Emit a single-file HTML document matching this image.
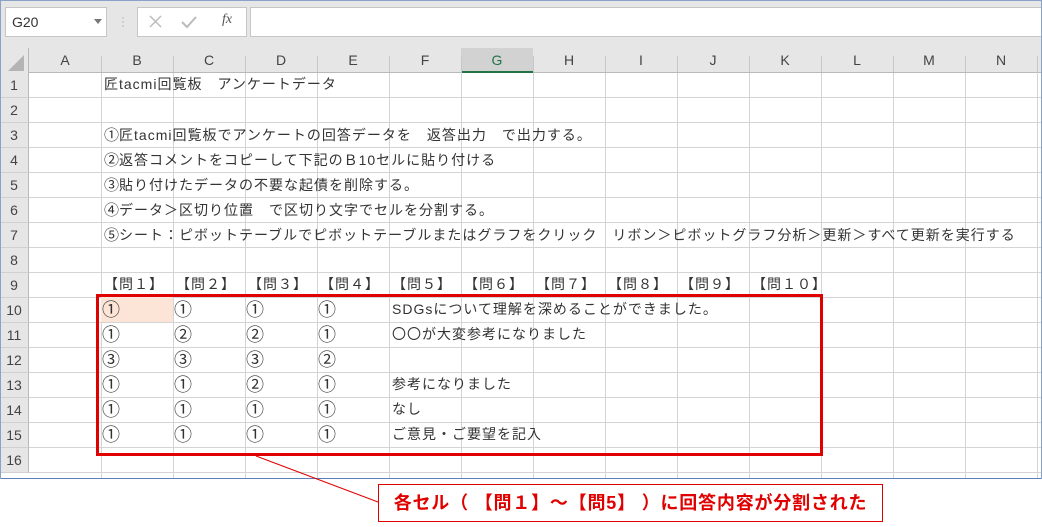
<!DOCTYPE html>
<html><head><meta charset="utf-8"><style>
*{margin:0;padding:0;box-sizing:border-box}
body{width:1042px;height:527px;background:#fff;position:relative;overflow:hidden;font-family:"Liberation Sans","Noto Sans CJK JP",sans-serif;color:#333}
.a{position:absolute}
.top{left:0;top:0;width:1042px;height:48px;background:#e6e6e6;border-top:1px solid #8aa2c8}
.box{background:#fff;border:1px solid #c6c6c6}
.hdr{top:48px;height:25px;background:#e6e6e6;border-bottom:1px solid #b9b9b9;font-size:14px;color:#444;text-align:center;line-height:25px}
.rn{left:0;width:29px;height:25px;background:#e6e6e6;border-right:1px solid #b9b9b9;border-bottom:1px solid #d0d0d0;font-size:14px;color:#444;text-align:center;line-height:25px}
.vl{top:73px;width:1px;height:405px;background:#d4d4d4}
.hl{left:29px;width:1013px;height:1px;background:#d4d4d4}
.t{font-size:14px;line-height:25px;white-space:nowrap;color:#333;letter-spacing:1px}
.c{font-family:"Noto Sans CJK JP",sans-serif;font-size:15px;letter-spacing:0}
.g{font-size:18px}
</style></head><body>
<div class="a top"></div>
<div class="a box" style="left:5px;top:7px;width:102px;height:30px;font-size:14px;line-height:28px;padding-left:6px;color:#333">G20<span style="position:absolute;left:88px;top:11px;border-left:4px solid transparent;border-right:4px solid transparent;border-top:5px solid #777"></span></div>
<div class="a" style="left:121px;top:15px;color:#aaa;font-size:12px;line-height:4px">·<br>·<br>·</div>
<div class="a box" style="left:137px;top:7px;width:110px;height:30px"></div>
<svg class="a" style="left:137px;top:7px" width="110" height="30"><path d="M13 9l11 11M24 9L13 20" stroke="#bbb" stroke-width="1.5"/><path d="M45 15l5 5 9-10" stroke="#bbb" stroke-width="2" fill="none"/></svg>
<div class="a" style="left:222px;top:12px;font-size:14px;font-style:italic;font-family:'Liberation Serif',serif;color:#555">fx</div>
<div class="a box" style="left:250px;top:7px;width:792px;height:30px"></div>
<div class="a hdr" style="left:0;width:1042px"></div>
<div class="a" style="left:0;top:48px;width:29px;height:25px;background:#e6e6e6;border-right:1px solid #b9b9b9"></div>
<div class="a" style="left:8px;top:55px;width:0;height:0;border-left:16px solid transparent;border-bottom:16px solid #b4b4b4"></div>
<div class="a hdr" style="left:461px;width:72px;background:#d2d2d2;color:#217346;border-bottom:2px solid #217346">G</div>
<div id="cols"></div>
<div class="a" style="left:0;top:478px;width:1042px;height:1px;background:#5b7fb8"></div>
<div class="a" style="left:0;top:0;width:1px;height:479px;background:#8aa2c8"></div>
<div class="a" style="left:1041px;top:0;width:1px;height:479px;background:#8aa2c8"></div>
<div class="a" style="left:101px;top:297px;width:72px;height:25px;background:#fce4d6"></div>
<script>
var L="ABCDEFGHIJKLMN",h="";
for(var i=0;i<14;i++){var x=29+i*72;
 if(i!=6)h+='<div class="a hdr" style="left:'+x+'px;width:72px;background:transparent">'+L[i]+'</div>';
 h+='<div class="a" style="left:'+(x+72)+'px;top:56px;width:1px;height:17px;background:#c8c8c8"></div>';
 h+='<div class="a vl" style="left:'+(x+72)+'px"></div>';}
for(var r=1;r<=16;r++){var y=73+(r-1)*25;
 h+='<div class="a rn" style="top:'+y+'px">'+r+'</div>';
 h+='<div class="a hl" style="top:'+(y+24)+'px"></div>';}
document.getElementById('cols').innerHTML=h;
</script>
<div class="a t" style="left:104px;top:72px">匠tacmi回覧板　アンケートデータ</div>
<div class="a t" style="left:104px;top:122px"><span class="c">①</span>匠tacmi回覧板でアンケートの回答データを　返答出力　で出力する。</div>
<div class="a t" style="left:104px;top:147px"><span class="c">②</span>返答コメントをコピーして下記のＢ10セルに貼り付ける</div>
<div class="a t" style="left:104px;top:172px"><span class="c">③</span>貼り付けたデータの不要な起債を削除する。</div>
<div class="a t" style="left:104px;top:197px"><span class="c">④</span>データ＞区切り位置　で区切り文字でセルを分割する。</div>
<div class="a t" style="left:104px;top:222px"><span class="c">⑤</span>シート：ピボットテーブルでピボットテーブルまたはグラフをクリック　リボン＞ピボットグラフ分析＞更新＞すべて更新を実行する</div>
<div class="a t" style="left:104px;top:272px">【問１】</div>
<div class="a t" style="left:176px;top:272px">【問２】</div>
<div class="a t" style="left:248px;top:272px">【問３】</div>
<div class="a t" style="left:320px;top:272px">【問４】</div>
<div class="a t" style="left:392px;top:272px">【問５】</div>
<div class="a t" style="left:464px;top:272px">【問６】</div>
<div class="a t" style="left:536px;top:272px">【問７】</div>
<div class="a t" style="left:608px;top:272px">【問８】</div>
<div class="a t" style="left:680px;top:272px">【問９】</div>
<div class="a t" style="left:752px;top:272px">【問１０】</div>
<div class="a t c g" style="left:102px;top:297px;line-height:25px">①<br>①<br>③<br>①<br>①<br>①</div>
<div class="a t c g" style="left:174px;top:297px;line-height:25px">①<br>②<br>③<br>①<br>①<br>①</div>
<div class="a t c g" style="left:246px;top:297px;line-height:25px">①<br>②<br>③<br>②<br>①<br>①</div>
<div class="a t c g" style="left:318px;top:297px;line-height:25px">①<br>①<br>②<br>①<br>①<br>①</div>
<div class="a t" style="left:392px;top:297px;line-height:25px">SDGsについて理解を深めることができました。<br>〇〇が大変参考になりました<br>&nbsp;<br>参考になりました<br>なし<br>ご意見・ご要望を記入</div>
<div class="a" style="left:96px;top:294px;width:727px;height:162px;border:3px solid #e00000"></div>
<svg class="a" style="left:0;top:0" width="1042" height="527"><line x1="256" y1="456" x2="378" y2="502" stroke="#e00000" stroke-width="1"/></svg>
<div class="a" style="left:378px;top:484px;width:505px;height:38px;border:1px solid #e00000;background:#fff;color:#e00000;font-weight:bold;font-size:18px;line-height:36px;text-align:center;letter-spacing:0.8px;white-space:nowrap">各セル（ 【問１】～【問5】 ）に回答内容が分割された</div>
</body></html>
